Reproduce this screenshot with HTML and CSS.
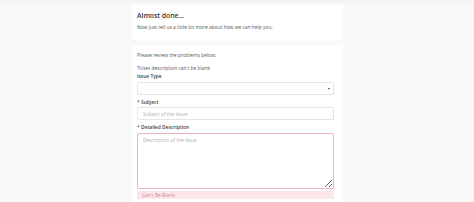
FILE: index.html
```html
<!DOCTYPE html>
<html lang="en">
<head>
  <meta charset="UTF-8">
  <title>Almost done</title>
  <link rel="stylesheet" href="styles.css">
</head>
<body>

<div class="topbar"></div>

<div class="wrapper">
  <div class="card header-card">
    <h2>Almost done...</h2>
    <p class="lead">Now just tell us a little bit more about how we can help you.</p>
  </div>

  <div class="card form-card">
    <p class="notice">Please review the problems below:</p>
    <p class="problem">Ticket description can't be blank</p>

    <label class="field-label">Issue Type</label>
    <div class="select-box"><span class="caret"></span></div>

    <label class="field-label"><span class="req">*</span> Subject</label>
    <input class="text-input" type="text" placeholder="Subject of the Issue">

    <label class="field-label"><span class="req">*</span> Detailed Description</label>
    <textarea class="text-area has-error" placeholder="Description of the issue"></textarea>
    <div class="error-msg">Can't Be Blank</div>
  </div>
</div>

</body>
</html>
```

FILE: styles.css
```css
body {
  margin: 0;
  background: #f9f9f9;
  font-family: "Open Sans", sans-serif;
  color: #333;
}

.topbar {
  height: 3px;
  background: #f3f3f3;
}

.wrapper {
  width: 210px;
  margin: 2px auto 0;
}

.card {
  background: #fff;
  padding: 0 8px 0 5px;
}

.header-card {
  height: 35px;
  margin-bottom: 6px;
}

.header-card h2 {
  margin: 0;
  padding-top: 6px;
  font-size: 6.8px;
  line-height: 9px;
  font-weight: 600;
  color: #333;
}

.lead {
  margin: 4px 0 0;
  font-size: 4.9px;
  line-height: 7px;
  color: #555;
}

.form-card {
  padding-top: 5.5px;
  height: 152px;
}

.notice,
.problem {
  margin: 0;
  font-size: 4.9px;
  line-height: 7px;
  color: #555;
}

.problem {
  margin-top: 6px;
}

.field-label {
  display: block;
  font-size: 4.9px;
  line-height: 7px;
  font-weight: 600;
  color: #444;
  margin-top: 1px;
}

.req {
  font-weight: 400;
  color: #444;
}

.select-box {
  position: relative;
  box-sizing: border-box;
  height: 13px;
  border: 1px solid #e4e4e4;
  border-radius: 1px;
  margin: 2.5px 0 3.5px;
}

.caret {
  position: absolute;
  right: 3px;
  top: 5px;
  border-left: 1.5px solid transparent;
  border-right: 1.5px solid transparent;
  border-top: 2px solid #555;
}

.text-input {
  display: block;
  box-sizing: border-box;
  width: 100%;
  height: 13px;
  margin: 1.5px 0 3.5px;
  border: 1px solid #e4e4e4;
  border-radius: 1px;
  padding: 0 5px;
  font-family: "Open Sans", sans-serif;
  font-size: 4.9px;
}

.text-area {
  display: block;
  box-sizing: border-box;
  width: 100%;
  height: 56px;
  margin: 2.5px 0 2px;
  border: 1px solid #e4e4e4;
  border-radius: 1px;
  padding: 3px 5px;
  font-family: "Open Sans", sans-serif;
  font-size: 4.9px;
  resize: vertical;
}

.text-input::placeholder,
.text-area::placeholder {
  color: #b0b0b0;
}

.text-area.has-error {
  border-color: #ebb6bd;
}

.error-msg {
  box-sizing: border-box;
  height: 8px;
  background: #fde6e9;
  color: #c98790;
  font-size: 4.9px;
  line-height: 8px;
  padding: 0 5px;
}
```
